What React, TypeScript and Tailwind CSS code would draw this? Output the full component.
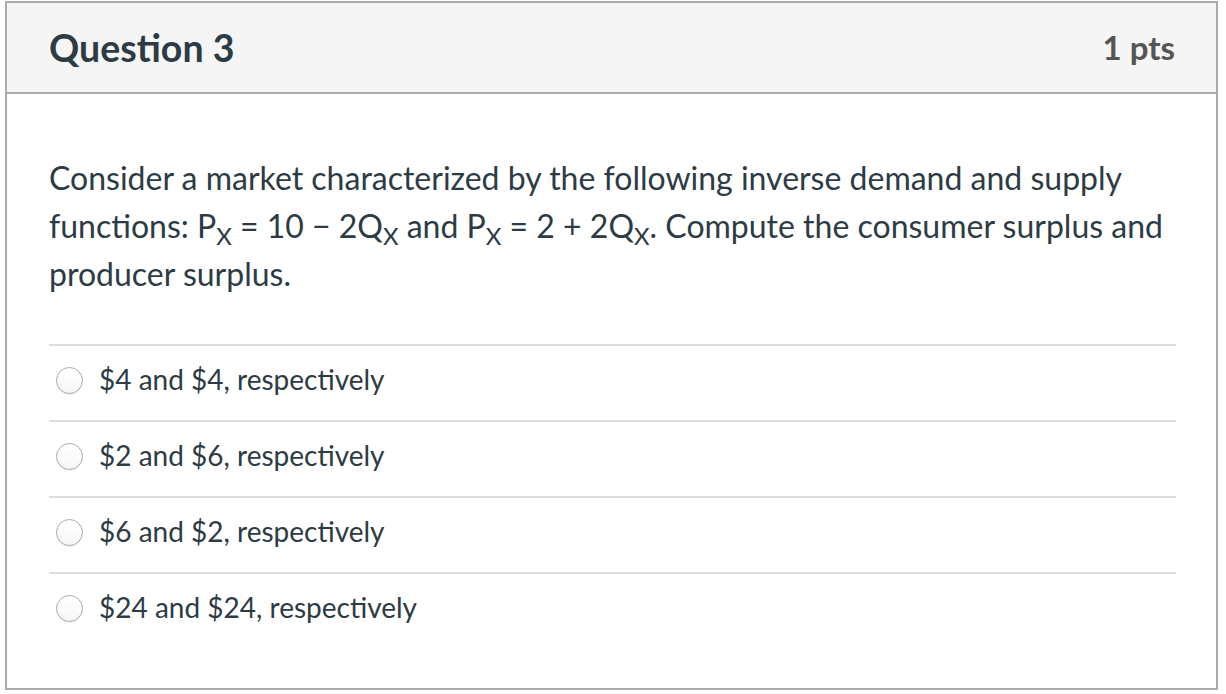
import React from "react";

const options = [
  "$4 and $4, respectively",
  "$2 and $6, respectively",
  "$6 and $2, respectively",
  "$24 and $24, respectively",
];

function Sub({ children }: { children: React.ReactNode }) {
  return <span className="align-[-7px] text-[24px] leading-none">{children}</span>;
}

export default function App() {
  return (
    <div
      className="min-h-[694px] bg-white pt-[1px] pl-[5px]"
      style={{ fontFamily: "Lato, 'Open Sans', sans-serif" }}
    >
      <div className="w-[1213px] h-[689px] border-2 border-[#aaaaaa] flex flex-col text-[#2d3b45]">
        <div className="h-[91px] shrink-0 bg-[#f5f5f5] border-b-2 border-[#aaaaaa] flex items-center justify-between pl-[42px] pr-[41px]">
          <div className="text-[37.5px] font-bold leading-none">Question 3</div>
          <div className="text-[33px] font-bold leading-none text-[#555555]">1 pts</div>
        </div>
        <div className="flex-1 pl-[42px] pr-[40px] pt-[60px]">
          <p className="text-[32px] leading-[48px]">
            Consider a market characterized by the following inverse demand and supply
            functions: P<Sub>X</Sub> = 10 − 2Q<Sub>X</Sub> and P<Sub>X</Sub> = 2 + 2Q<Sub>X</Sub>. Compute
            the consumer surplus and producer surplus.
          </p>
          <div className="mt-[46px]">
            {options.map((o) => (
              <div
                key={o}
                className="h-[76px] border-t-2 border-[#dddddd] flex items-center"
              >
                <span className="relative top-[-3px] ml-[7px] w-[27px] h-[27px] rounded-full border border-[#a9a9a9] bg-gradient-to-b from-white to-[#f7f7f7] shadow-[0_1px_1px_rgba(0,0,0,0.06)] shrink-0" />
                <span className="relative top-[-4px] ml-[16px] text-[28px] leading-none">{o}</span>
              </div>
            ))}
          </div>
        </div>
      </div>
    </div>
  );
}
